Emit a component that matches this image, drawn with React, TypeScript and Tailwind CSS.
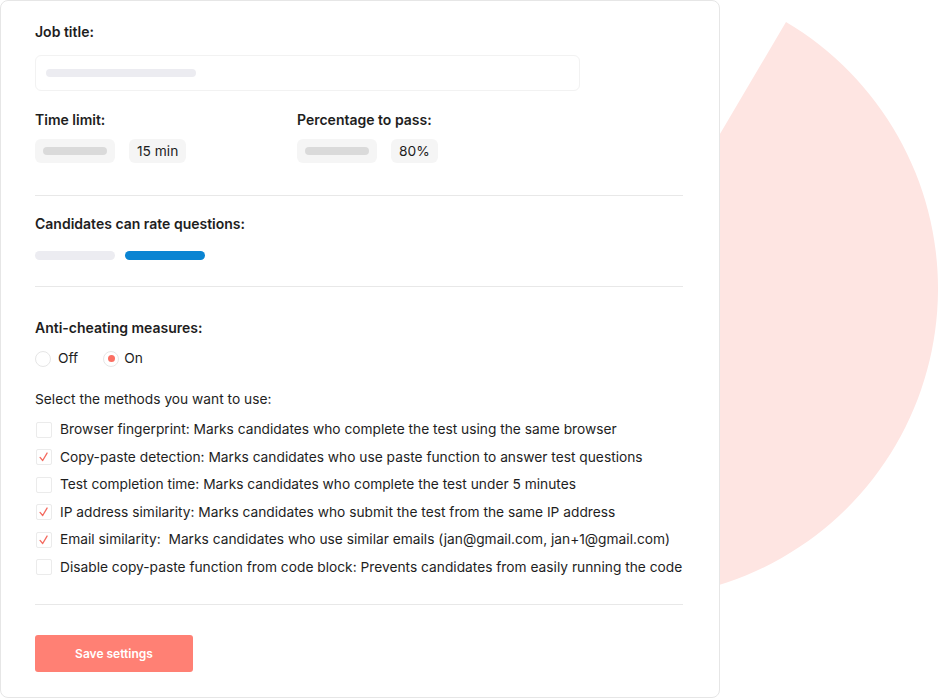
const METHODS = [
  {
    label:
      "Browser fingerprint: Marks candidates who complete the test using the same browser",
    checked: false,
  },
  {
    label:
      "Copy-paste detection: Marks candidates who use paste function to answer test questions",
    checked: true,
  },
  {
    label:
      "Test completion time: Marks candidates who complete the test under 5 minutes",
    checked: false,
  },
  {
    label:
      "IP address similarity: Marks candidates who submit the test from the same IP address",
    checked: true,
  },
  {
    label:
      "Email similarity:  Marks candidates who use similar emails (jan@gmail.com, jan+1@gmail.com)",
    checked: true,
  },
  {
    label:
      "Disable copy-paste function from code block: Prevents candidates from easily running the code",
    checked: false,
  },
];

function Checkbox({ checked }: { checked: boolean }) {
  return (
    <span className="flex h-4 w-4 shrink-0 items-center justify-center rounded-[2px] border border-[#ebebeb] bg-white">
      {checked && (
        <svg viewBox="0 0 16 16" className="h-[14px] w-[14px]">
          <path
            d="M3.5 8.5 L6.5 12 L11.5 3.5"
            fill="none"
            stroke="#f46a5f"
            strokeWidth="1.5"
            strokeLinecap="round"
            strokeLinejoin="round"
          />
        </svg>
      )}
    </span>
  );
}

function Radio({ on, label }: { on: boolean; label: string }) {
  return (
    <label className={on ? "flex items-center gap-[5px]" : "flex items-center gap-[7px]"}>
      <span className="flex h-4 w-4 items-center justify-center rounded-full border border-[#e6e6e6] bg-white">
        {on && <span className="h-[7px] w-[7px] rounded-full bg-[#fb6f63]" />}
      </span>
      <span>{label}</span>
    </label>
  );
}

function ValueField({ value }: { value: string }) {
  return (
    <div className="flex items-center gap-[14px]">
      <div className="flex h-6 w-20 items-center rounded-md bg-[#f5f5f5] px-2">
        <div className="h-2 w-16 rounded-full bg-[#dadada]" />
      </div>
      <div className="flex h-6 items-center rounded-md bg-[#f5f5f5] px-2">
        {value}
      </div>
    </div>
  );
}

export default function App() {
  return (
    <div
      className="relative h-[698px] w-[940px] overflow-hidden bg-white text-[13.75px] leading-[17px] text-[#1e1e1e]"
      style={{ fontFamily: "Inter, 'Noto Sans', sans-serif" }}
    >
      <svg
        className="absolute left-0 top-0"
        width="940"
        height="698"
        viewBox="0 0 940 698"
      >
        <path
          d="M628 290 L786 22 A310 310 0 1 1 318 290 Z"
          fill="#fee5e2"
        />
      </svg>

      <div className="relative flex h-[698px] w-[720px] flex-col rounded-lg border border-[#e6e6e6] bg-white px-[34px] pt-[22px]">
        <div className="text-[14px] font-semibold">Job title:</div>
        <div className="mt-[15px] flex h-9 w-[545px] items-center rounded-md border border-[#f2f2f2] px-[10px]">
          <div className="h-2 w-[150px] rounded-full bg-[#ececf1]" />
        </div>

        <div className="mt-5 flex gap-[64px]">
          <div className="w-[198px]">
            <div className="text-[14px] font-semibold">Time limit:</div>
            <div className="mt-[11px]">
              <ValueField value="15 min" />
            </div>
          </div>
          <div>
            <div className="text-[14px] font-semibold">Percentage to pass:</div>
            <div className="mt-[11px]">
              <ValueField value="80%" />
            </div>
          </div>
        </div>

        <div className="mt-8 h-px w-[648px] bg-[#e8e8e8]" />

        <div className="mt-[19px] text-[14px] font-semibold">
          Candidates can rate questions:
        </div>
        <div className="mt-[19px] flex gap-[10px]">
          <div className="h-[9px] w-20 rounded-full bg-[#ececf1]" />
          <div className="h-[9px] w-20 rounded-full bg-[#0a84d2]" />
        </div>

        <div className="mt-[26px] h-px w-[648px] bg-[#e8e8e8]" />

        <div className="mt-8 text-[14px] font-semibold">Anti-cheating measures:</div>
        <div className="mt-[14px] flex gap-[25px]">
          <Radio on={false} label="Off" />
          <Radio on={true} label="On" />
        </div>

        <div className="mt-6">Select the methods you want to use:</div>
        <div className="mt-[13px] flex flex-col gap-[10.6px]">
          {METHODS.map((m) => (
            <div key={m.label} className="flex items-center gap-2 pl-px">
              <Checkbox checked={m.checked} />
              <span className="whitespace-pre">{m.label}</span>
            </div>
          ))}
        </div>

        <div className="mt-7 h-px w-[648px] bg-[#e8e8e8]" />

        <button className="mt-[30px] h-[37px] w-[158px] rounded-[3px] bg-[#ff8074] text-[12px] font-semibold text-white">
          Save settings
        </button>
      </div>
    </div>
  );
}
